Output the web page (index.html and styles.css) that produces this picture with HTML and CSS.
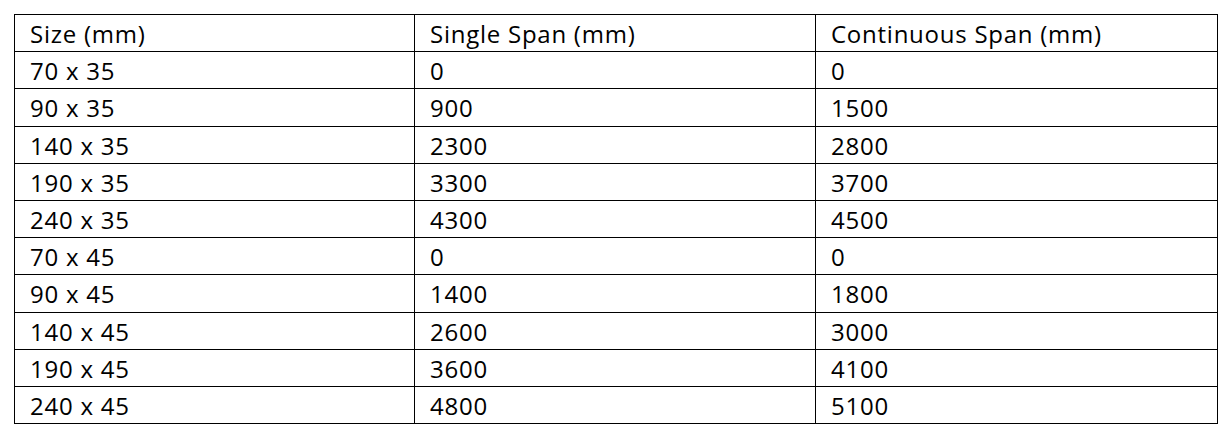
FILE: index.html
```html
<!DOCTYPE html>
<html>
<head>
<meta charset="utf-8">
<link rel="stylesheet" href="styles.css">
</head>
<body>
<table class="span-table">
  <colgroup>
    <col class="c1"><col class="c2"><col class="c3">
  </colgroup>
  <tr><td>Size (mm)</td><td>Single Span (mm)</td><td>Continuous Span (mm)</td></tr>
  <tr><td>70 x 35</td><td>0</td><td>0</td></tr>
  <tr><td>90 x 35</td><td>900</td><td>1500</td></tr>
  <tr><td>140 x 35</td><td>2300</td><td>2800</td></tr>
  <tr><td>190 x 35</td><td>3300</td><td>3700</td></tr>
  <tr><td>240 x 35</td><td>4300</td><td>4500</td></tr>
  <tr><td>70 x 45</td><td>0</td><td>0</td></tr>
  <tr><td>90 x 45</td><td>1400</td><td>1800</td></tr>
  <tr><td>140 x 45</td><td>2600</td><td>3000</td></tr>
  <tr><td>190 x 45</td><td>3600</td><td>4100</td></tr>
  <tr><td>240 x 45</td><td>4800</td><td>5100</td></tr>
</table>
</body>
</html>
```
FILE: styles.css
```css
html, body {
  margin: 0;
  padding: 0;
  background: #ffffff;
}
body {
  padding: 14px 0 0 14px;
}
.span-table {
  border-collapse: collapse;
  table-layout: fixed;
  width: 1203px;
  font-family: "Open Sans", "Noto Sans", sans-serif;
  font-size: 24px;
  letter-spacing: 0.75px;
  color: #000000;
}
.c1 { width: 400px; }
.c2 { width: 401px; }
.c3 { width: 402px; }
.span-table tr {
  height: 37.2px;
}
.span-table td {
  border: 1px solid #000000;
  padding: 2px 0 0 15px;
  line-height: 30px;
  vertical-align: middle;
  white-space: nowrap;
}
```
